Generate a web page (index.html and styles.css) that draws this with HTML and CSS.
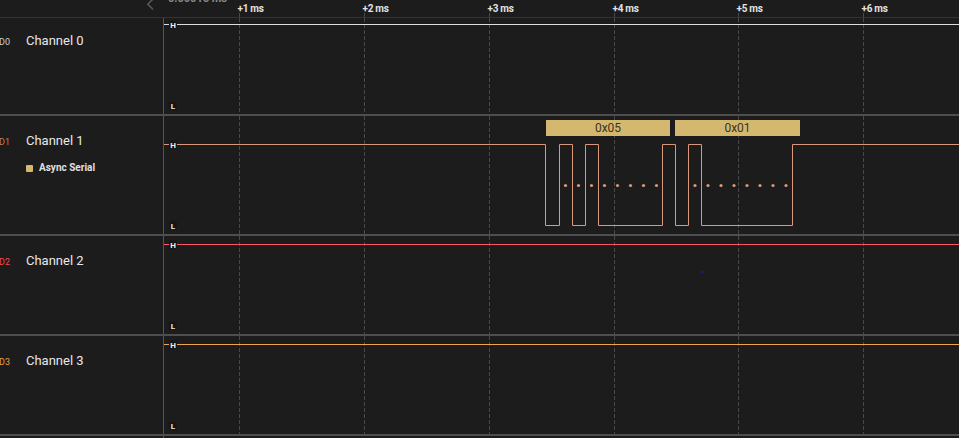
FILE: index.html
```html
<!DOCTYPE html>
<html>
<head>
<meta charset="utf-8">
<link rel="stylesheet" href="styles.css">
</head>
<body>
<div class="app">
  <div class="header">
    <div class="header-left">
      <svg class="chev" width="10" height="12" viewBox="0 0 10 12"><polyline points="7,-1 1.8,4.2 7,9.4"/></svg>
    </div>
    <svg class="axis" width="795" height="17" viewBox="0 0 795 17">
      <text class="cursor-time" x="4" y="2">0.00016 ms</text>
      <g class="ticks">
        <line x1="75.5" y1="13" x2="75.5" y2="17"/>
        <line x1="200.5" y1="13" x2="200.5" y2="17"/>
        <line x1="325.5" y1="13" x2="325.5" y2="17"/>
        <line x1="450.5" y1="13" x2="450.5" y2="17"/>
        <line x1="574.5" y1="13" x2="574.5" y2="17"/>
        <line x1="699.5" y1="13" x2="699.5" y2="17"/>
      </g>
      <g class="axis-labels">
        <text x="73.5" y="12">+1 ms</text>
        <text x="198.5" y="12">+2 ms</text>
        <text x="323.5" y="12">+3 ms</text>
        <text x="448.5" y="12">+4 ms</text>
        <text x="572.5" y="12">+5 ms</text>
        <text x="697.5" y="12">+6 ms</text>
      </g>
    </svg>
  </div>

  <div class="channel ch0">
    <div class="label">
      <div class="name-row"><span class="tag tag0">D0</span><span class="name">Channel 0</span></div>
    </div>
    <svg class="wave" width="795" height="96" viewBox="0 0 795 96">
      <g class="grid">
        <line x1="75.5" y1="0" x2="75.5" y2="96"/>
        <line x1="200.5" y1="0" x2="200.5" y2="96"/>
        <line x1="325.5" y1="0" x2="325.5" y2="96"/>
        <line x1="450.5" y1="0" x2="450.5" y2="96"/>
        <line x1="574.5" y1="0" x2="574.5" y2="96"/>
        <line x1="699.5" y1="0" x2="699.5" y2="96"/>
      </g>
      <line class="sig s0" x1="0" y1="6.5" x2="795" y2="6.5"/>
      <rect class="lvl-bg" x="5" y="2.5" width="8" height="8"/>
      <text class="lvl" x="9" y="9.5">H</text>
      <rect class="lvl-bg" x="5" y="84" width="8" height="8"/>
      <text class="lvl" x="9" y="91">L</text>
    </svg>
  </div>

  <div class="channel ch1">
    <div class="label">
      <div class="name-row"><span class="tag tag1">D1</span><span class="name">Channel 1</span></div>
      <div class="decoder"><span class="swatch"></span><span class="decoder-name">Async Serial</span></div>
    </div>
    <svg class="wave" width="795" height="118" viewBox="0 0 795 118">
      <g class="grid">
        <line x1="75.5" y1="0" x2="75.5" y2="118"/>
        <line x1="200.5" y1="0" x2="200.5" y2="118"/>
        <line x1="325.5" y1="0" x2="325.5" y2="118"/>
        <line x1="450.5" y1="0" x2="450.5" y2="118"/>
        <line x1="574.5" y1="0" x2="574.5" y2="118"/>
        <line x1="699.5" y1="0" x2="699.5" y2="118"/>
      </g>
      <rect class="byte" x="382" y="4" width="124" height="16"/>
      <text class="byte-text" x="444" y="16">0x05</text>
      <rect class="byte" x="511" y="4" width="125" height="16"/>
      <text class="byte-text" x="573.5" y="16">0x01</text>
      <path class="sig s1" d="M0 28.5 H381.5 V109.5 H395.5 V28.5 H408.5 V109.5 H421.5 V28.5 H434.5 V109.5 H498.5 V28.5 H511.5 V109.5 H524.5 V28.5 H537.5 V109.5 H628.5 V28.5 H795"/>
      <g class="dots">
        <circle cx="401.5" cy="69.5" r="1.6"/>
        <circle cx="414.5" cy="69.5" r="1.6"/>
        <circle cx="427.5" cy="69.5" r="1.6"/>
        <circle cx="440.5" cy="69.5" r="1.6"/>
        <circle cx="453.5" cy="69.5" r="1.6"/>
        <circle cx="466.5" cy="69.5" r="1.6"/>
        <circle cx="479.5" cy="69.5" r="1.6"/>
        <circle cx="492.5" cy="69.5" r="1.6"/>
        <circle cx="531" cy="69.5" r="1.6"/>
        <circle cx="544" cy="69.5" r="1.6"/>
        <circle cx="557" cy="69.5" r="1.6"/>
        <circle cx="570" cy="69.5" r="1.6"/>
        <circle cx="583" cy="69.5" r="1.6"/>
        <circle cx="596" cy="69.5" r="1.6"/>
        <circle cx="609" cy="69.5" r="1.6"/>
        <circle cx="622" cy="69.5" r="1.6"/>
      </g>
      <rect class="lvl-bg" x="5" y="24.5" width="8" height="8"/>
      <text class="lvl" x="9" y="31.5">H</text>
      <rect class="lvl-bg" x="5" y="105.5" width="8" height="8"/>
      <text class="lvl" x="9" y="112.5">L</text>
    </svg>
  </div>

  <div class="channel ch2">
    <div class="label">
      <div class="name-row"><span class="tag tag2">D2</span><span class="name">Channel 2</span></div>
    </div>
    <svg class="wave" width="795" height="98" viewBox="0 0 795 98">
      <g class="grid">
        <line x1="75.5" y1="0" x2="75.5" y2="98"/>
        <line x1="200.5" y1="0" x2="200.5" y2="98"/>
        <line x1="325.5" y1="0" x2="325.5" y2="98"/>
        <line x1="450.5" y1="0" x2="450.5" y2="98"/>
        <line x1="574.5" y1="0" x2="574.5" y2="98"/>
        <line x1="699.5" y1="0" x2="699.5" y2="98"/>
      </g>
      <line class="sig s2" x1="0" y1="8.5" x2="795" y2="8.5"/>
      <rect class="blip" x="537" y="35" width="2" height="2"/>
      <rect class="lvl-bg" x="5" y="4.5" width="8" height="8"/>
      <text class="lvl" x="9" y="11.5">H</text>
      <rect class="lvl-bg" x="5" y="86" width="8" height="8"/>
      <text class="lvl" x="9" y="93">L</text>
    </svg>
  </div>

  <div class="channel ch3">
    <div class="label">
      <div class="name-row"><span class="tag tag3">D3</span><span class="name">Channel 3</span></div>
    </div>
    <svg class="wave" width="795" height="98" viewBox="0 0 795 98">
      <g class="grid">
        <line x1="75.5" y1="0" x2="75.5" y2="98"/>
        <line x1="200.5" y1="0" x2="200.5" y2="98"/>
        <line x1="325.5" y1="0" x2="325.5" y2="98"/>
        <line x1="450.5" y1="0" x2="450.5" y2="98"/>
        <line x1="574.5" y1="0" x2="574.5" y2="98"/>
        <line x1="699.5" y1="0" x2="699.5" y2="98"/>
      </g>
      <line class="sig s3" x1="0" y1="8.5" x2="795" y2="8.5"/>
      <rect class="lvl-bg" x="5" y="4.5" width="8" height="8"/>
      <text class="lvl" x="9" y="11.5">H</text>
      <rect class="lvl-bg" x="5" y="86" width="8" height="8"/>
      <text class="lvl" x="9" y="93">L</text>
    </svg>
  </div>

  <div class="tail">
    <div class="tail-label"></div>
  </div>
</div>
</body>
</html>
```

FILE: styles.css
```css
* { box-sizing: border-box; margin: 0; padding: 0; }

html, body {
  background: #1c1c1c;
  overflow: hidden;
}

body {
  width: 959px;
  height: 438px;
  font-family: Roboto, "Noto Sans", "Liberation Sans", sans-serif;
  color: #e6e6e6;
}

.app {
  display: flex;
  flex-direction: column;
  width: 959px;
}

/* header */
.header {
  display: flex;
  height: 18px;
  border-bottom: 1px solid #333333;
}

.header-left {
  width: 164px;
  flex: none;
}

.chev {
  display: block;
  margin-left: 146px;
}

.chev polyline {
  fill: none;
  stroke: #575757;
  stroke-width: 1.6;
}

.axis {
  display: block;
  flex: none;
}

.cursor-time {
  font-family: Roboto, sans-serif;
  font-size: 11px;
  font-weight: 700;
  fill: #8a8a8a;
}

.ticks line {
  stroke: #4a4a4a;
  stroke-width: 1;
}

.axis-labels text {
  font-family: Roboto, sans-serif;
  font-size: 10px;
  font-weight: 700;
  letter-spacing: -0.3px;
  fill: #e2e2e2;
}

/* channels */
.channel {
  display: flex;
  border-bottom: 2px solid #4e4e4e;
}

.label {
  width: 164px;
  flex: none;
  border-right: 1px solid #555555;
  padding-top: 17px;
  overflow: hidden;
}

.ch0 .label { padding-top: 15px; }

.name-row {
  display: flex;
  align-items: baseline;
  line-height: 15px;
}

.tag {
  width: 27px;
  margin-left: -1px;
  font-size: 9px;
  flex: none;
}

.tag0 { color: #cfcfcf; }
.tag1 { color: #c27a5c; }
.tag2 { color: #f04a4e; }
.tag3 { color: #eea04a; }

.name {
  font-size: 13px;
  color: #e8e8e8;
}

.decoder {
  display: flex;
  align-items: center;
  gap: 6px;
  margin-left: 26px;
  margin-top: 12px;
  line-height: 12px;
}

.swatch {
  width: 7px;
  height: 7px;
  background: #d4b870;
  border-radius: 1px;
  flex: none;
}

.decoder-name {
  font-size: 10px;
  font-weight: 700;
  color: #e0e0e0;
}

.wave {
  display: block;
  flex: none;
}

.grid line {
  stroke: #484848;
  stroke-width: 1;
  stroke-dasharray: 4 2;
}

.sig {
  fill: none;
  stroke-width: 1;
}

.s0 { stroke: #dedede; }
.s1 { stroke: #d9987a; }
.s2 { stroke: #ff5566; }
.s3 { stroke: #f2a44c; }

.dots circle { fill: #d9987a; }

.byte { fill: #d4b870; }

.byte-text {
  font-family: Roboto, sans-serif;
  font-size: 12px;
  fill: #3a3320;
  text-anchor: middle;
}

.lvl-bg { fill: #161616; }

.lvl {
  font-family: Roboto, sans-serif;
  font-size: 8px;
  font-weight: 700;
  fill: #f0f0f0;
  text-anchor: middle;
}

.blip { fill: #1c1ca0; }

.tail {
  display: flex;
  height: 4px;
}

.tail-label {
  width: 164px;
  border-right: 1px solid #555555;
}
```
